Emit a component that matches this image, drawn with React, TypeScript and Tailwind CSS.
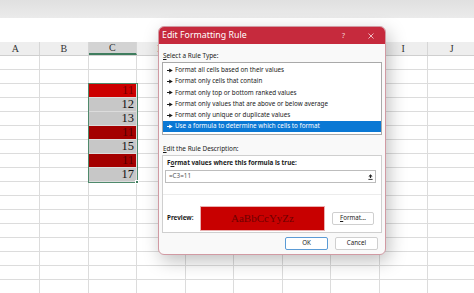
import React from "react";

const COLS = ["A", "B", "C", "D", "E", "F", "G", "H", "I", "J"];
type Kind = "active" | "red" | "gray";
const DATA: Record<number, { v: number; kind: Kind }> = {
  2: { v: 11, kind: "active" },
  3: { v: 12, kind: "gray" },
  4: { v: 13, kind: "gray" },
  5: { v: 11, kind: "red" },
  6: { v: 15, kind: "gray" },
  7: { v: 11, kind: "red" },
  8: { v: 17, kind: "gray" },
};
const KIND_CLASS: Record<Kind, string> = {
  active: "bg-[#cc0000] text-[#760000]",
  red: "bg-[#a40000] text-[#560000]",
  gray: "bg-[#c7c7c7] text-[#111]",
};

const RULES = [
  "Format all cells based on their values",
  "Format only cells that contain",
  "Format only top or bottom ranked values",
  "Format only values that are above or below average",
  "Format only unique or duplicate values",
  "Use a formula to determine which cells to format",
];

function Arrow({ color }: { color: string }) {
  return (
    <svg width="6" height="5" viewBox="0 0 6 5" className="shrink-0">
      <rect x="0" y="2" width="3" height="1" fill={color} />
      <path d="M2.2 0.4 L5.8 2.5 L2.2 4.6 Z" fill={color} />
    </svg>
  );
}

export default function App() {
  return (
    <div className="relative w-[474px] h-[293px] overflow-hidden bg-white font-['Liberation_Serif',serif]">
      <div className="h-[18px] bg-gradient-to-b from-[#e0e0e0] to-[#ebebeb]" />
      <div className="h-[24px] bg-white" />
      <div className="ml-[-8.5px] flex flex-col">
        <div className="flex h-[14px] bg-[#eeeeee] border-b border-[#cfcfcf]">
          {COLS.map((c) => (
            <div
              key={c}
              className={
                "w-[48.5px] shrink-0 flex items-center justify-center text-[10px] leading-none text-[#333] border-r border-[#d6d6d6] " +
                (c === "C" ? "bg-[#d3d3d3] border-b-2 border-b-[#3f7d5e]" : "")
              }
            >
              {c}
            </div>
          ))}
        </div>
        {Array.from({ length: 17 }).map((_, r) => (
          <div key={r} className="flex h-[14px]">
            {COLS.map((c) => {
              const d = c === "C" ? DATA[r] : undefined;
              return (
                <div
                  key={c}
                  className={
                    "w-[48.5px] shrink-0 border-r border-b border-[#dcdcdc] flex items-center justify-end pr-[2px] text-[12.5px] leading-none " +
                    (d ? KIND_CLASS[d.kind] : "")
                  }
                >
                  {d ? d.v : ""}
                </div>
              );
            })}
          </div>
        ))}
      </div>
      {/* selection outline */}
      <div className="absolute left-[87.5px] top-[83px] w-[50px] h-[100px] border-[1.5px] border-[#4f8a6c]" />
      <div className="absolute left-[135px] top-[180px] w-[4px] h-[4px] bg-[#3f7d5e] border border-white" />

      {/* dialog */}
      <div className="absolute left-[158px] top-[26px] w-[228px] h-[229px] rounded-[6px] border border-[#d19aa3] bg-[#f9f9f9] shadow-[3px_6px_18px_rgba(0,0,0,0.25)] overflow-hidden flex flex-col font-['Noto_Sans',sans-serif] text-[#1b1b1b]">
        <div className="h-[17px] shrink-0 bg-[#c62a3d] flex items-center pl-[3px] pr-[11px] text-white">
          <span className="text-[8.8px] leading-none">Edit Formatting Rule</span>
          <span className="ml-auto text-[7.5px] leading-none text-[#f4d4d8]">?</span>
          <svg width="6" height="6" viewBox="0 0 6 6" className="ml-[23px]">
            <path d="M0.5 0.5 L5.5 5.5 M5.5 0.5 L0.5 5.5" stroke="#f8e0e3" strokeWidth="0.8" />
          </svg>
        </div>
        <div className="flex flex-col px-[3px]">
          <div className="mt-[8px] h-[8px] flex items-center text-[6.4px] leading-none pl-[1px]">
            <span>
              <span className="underline">S</span>elect a Rule Type:
            </span>
          </div>
          <div className="mt-[2px] h-[73px] border border-[#a9a9a9] bg-white py-[1.5px]">
            {RULES.map((t, i) => {
              const sel = i === RULES.length - 1;
              return (
                <div
                  key={t}
                  className={
                    "h-[11.3px] flex items-center gap-[2px] pl-[4px] text-[6.3px] leading-none " +
                    (sel ? "bg-[#0a78d4] text-white" : "")
                  }
                >
                  <Arrow color={sel ? "#ffffff" : "#1b1b1b"} />
                  <span>{t}</span>
                </div>
              );
            })}
          </div>
          <div className="mt-[10px] h-[8px] flex items-center text-[6.4px] leading-none pl-[1px]">
            <span>
              <span className="underline">E</span>dit the Rule Description:
            </span>
          </div>
          <div className="mt-[2px] h-[78px] border border-[#cfcfcf] bg-white flex flex-col">
            <div className="mt-[3px] h-[8px] flex items-center pl-[4px] text-[6.3px] font-bold leading-none">
              <span>
                F<span className="underline">o</span>rmat values where this formula is true:
              </span>
            </div>
            <div className="mt-[3px] ml-[2px] mr-[5px] h-[13px] border border-[#bdbdbd] bg-white flex items-center pl-[3px] pr-[2px]">
              <span className="text-[6.3px] leading-none text-[#555]">=C3=11</span>
              <svg width="5" height="6" viewBox="0 0 5 6" className="ml-auto">
                <path d="M2.5 0.3 L4.6 2.6 L3.1 2.6 L3.1 4.1 L1.9 4.1 L1.9 2.6 L0.4 2.6 Z" fill="#222" />
                <rect x="0.4" y="4.9" width="4.2" height="0.9" fill="#222" />
              </svg>
            </div>
            <div className="mt-[11px] h-px bg-[#ececec]" />
            <div className="mt-[11px] h-[25px] flex items-center pl-[4px]">
              <span className="w-[33px] text-[6.3px] font-bold leading-none">Preview:</span>
              <div className="w-[125px] h-[25px] bg-[#c80000] border border-[#e9b0b0] flex items-center justify-center">
                <span className="font-['Liberation_Serif',serif] text-[11px] leading-none text-[#6e0000]">
                  AaBbCcYyZz
                </span>
              </div>
              <div className="ml-[7px] w-[42px] h-[13px] border border-[#cfcfcf] rounded-[2px] bg-white flex items-center justify-center text-[6.2px] leading-none">
                <span>
                  <span className="underline">F</span>ormat...
                </span>
              </div>
            </div>
          </div>
          <div className="mt-[4px] flex justify-end gap-[7px] pr-[4px]">
            <div className="w-[43px] h-[13px] border border-[#5b9bd5] rounded-[2px] bg-white flex items-center justify-center text-[6.2px] leading-none">
              OK
            </div>
            <div className="w-[43px] h-[13px] border border-[#cfcfcf] rounded-[2px] bg-white flex items-center justify-center text-[6.2px] leading-none">
              Cancel
            </div>
          </div>
        </div>
      </div>
    </div>
  );
}
